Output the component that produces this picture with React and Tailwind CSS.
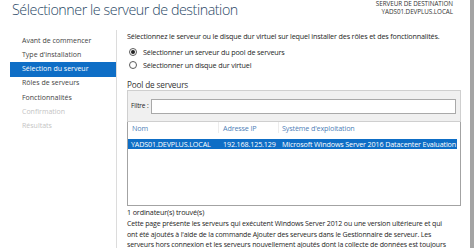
import React from 'react';

const navItems = [
    { label: 'Avant de commencer', state: 'done' },
    { label: "Type d'installation", state: 'done' },
    { label: 'Sélection du serveur', state: 'active' },
    { label: 'Rôles de serveurs', state: 'done' },
    { label: 'Fonctionnalités', state: 'done' },
    { label: 'Confirmation', state: 'disabled' },
    { label: 'Résultats', state: 'disabled' },
];

const Radio = ({ checked, label }) => (
    <div className='flex items-center h-[13px]'>
        <span className='w-[8px] h-[8px] rounded-full border border-[#5a5a5a] bg-white flex items-center justify-center ml-[2px] mr-[6px]'>
            {checked && <span className='w-[4px] h-[4px] rounded-full bg-[#222]'></span>}
        </span>
        <span>{label}</span>
    </div>
);

const App = () => {
    return (
        <div className='w-[474px] h-[248px] overflow-hidden bg-white flex text-[#1e1e1e]' style={{ fontFamily: '"Open Sans", "Noto Sans", sans-serif' }}>
            <div className='w-[470px] flex flex-col'>
                {/* Header */}
                <div className='h-[30px] flex justify-between items-start shrink-0'>
                    <h1 className='pl-[12px] pt-[1px] text-[14.3px] leading-[18px] font-light text-[#2a4866] tracking-[-0.45px]'>
                        Sélectionner le serveur de destination
                    </h1>
                    <div className='pr-[17px] text-right text-[6.3px] leading-[8px] text-[#333] tracking-[-0.05px]'>
                        <div>SERVEUR DE DESTINATION</div>
                        <div>YADS01.DEVPLUS.LOCAL</div>
                    </div>
                </div>

                {/* Body */}
                <div className='flex flex-1 min-h-0'>
                    {/* Nav */}
                    <div className='w-[117px] shrink-0 pt-[4px] border-r border-[#dcdcdc]'>
                        {navItems.map(item => (
                            <div
                                key={item.label}
                                className={
                                    item.state === 'active'
                                        ? 'ml-[10px] h-[14.2px] pl-[12px] flex items-center text-[7px] text-white bg-[#0e6ec6] whitespace-nowrap'
                                        : item.state === 'disabled'
                                            ? 'ml-[10px] h-[14.2px] pl-[12px] flex items-center text-[7px] text-[#c4c4c4] whitespace-nowrap'
                                            : 'ml-[10px] h-[14.2px] pl-[12px] flex items-center text-[7px] text-[#444] whitespace-nowrap'
                                }
                            >
                                {item.label}
                            </div>
                        ))}
                    </div>

                    {/* Content */}
                    <div className='flex-1 pl-[10px] pr-[9px] pt-[1px] text-[7.2px] leading-[10px] whitespace-nowrap tracking-[-0.15px]'>
                        <p>Sélectionnez le serveur ou le disque dur virtuel sur lequel installer des rôles et des fonctionnalités.</p>

                        <div className='mt-[4px]'>
                            <Radio checked label='Sélectionner un serveur du pool de serveurs' />
                            <Radio label='Sélectionner un disque dur virtuel' />
                        </div>

                        <div className='mt-[8px] text-[8.2px] leading-[11px] text-[#333]'>Pool de serveurs</div>

                        {/* Filter box */}
                        <div className='h-[32px] bg-[#f0f0f0] border border-[#cfcfcf] flex items-center pl-[3px] pr-[4px]'>
                            <span className='mr-[3px] text-[6.5px]'>Filtre :</span>
                            <div className='flex-1 h-[15px] bg-white border border-[#a9a9a9] mt-[1px]'></div>
                        </div>

                        {/* Grid */}
                        <div className='h-[84px] border border-t-0 border-[#a3a3a3] bg-white'>
                            <div className='h-[11px] flex items-center text-[#4f7fb8]'>
                                <div className='w-[91px] pl-[4px] border-r border-[#ececec] h-full flex items-center'>Nom</div>
                                <div className='w-[60px] pl-[4px] border-r border-[#ececec] h-full flex items-center'>Adresse IP</div>
                                <div className='pl-[3px]'>Système d'exploitation</div>
                            </div>
                            <div className='mt-[6px] h-[10px] mr-[3px] bg-[#0e6ec6] text-white flex items-center'>
                                <div className='w-[91px] pl-[3px]'>YADS01.DEVPLUS.LOCAL</div>
                                <div className='w-[60px] pl-[4px]'>192.168.125.129</div>
                                <div className='pl-[3px]'>Microsoft Windows Server 2016 Datacenter Evaluation</div>
                            </div>
                        </div>

                        <div className='mt-[1px] leading-[10px]'>1 ordinateur(s) trouvé(s)</div>
                        <p className='mt-[2px] text-[7px] leading-[10.7px]'>
                            Cette page présente les serveurs qui exécutent Windows Server 2012 ou une version ultérieure et qui<br />
                            ont été ajoutés à l'aide de la commande Ajouter des serveurs dans le Gestionnaire de serveur. Les<br />
                            serveurs hors connexion et les serveurs nouvellement ajoutés dont la collecte de données est toujours
                        </p>
                    </div>
                </div>
            </div>
            <div className='w-[4px] bg-[#a4a4a4] shrink-0'></div>
        </div>
    );
};

export default App;
